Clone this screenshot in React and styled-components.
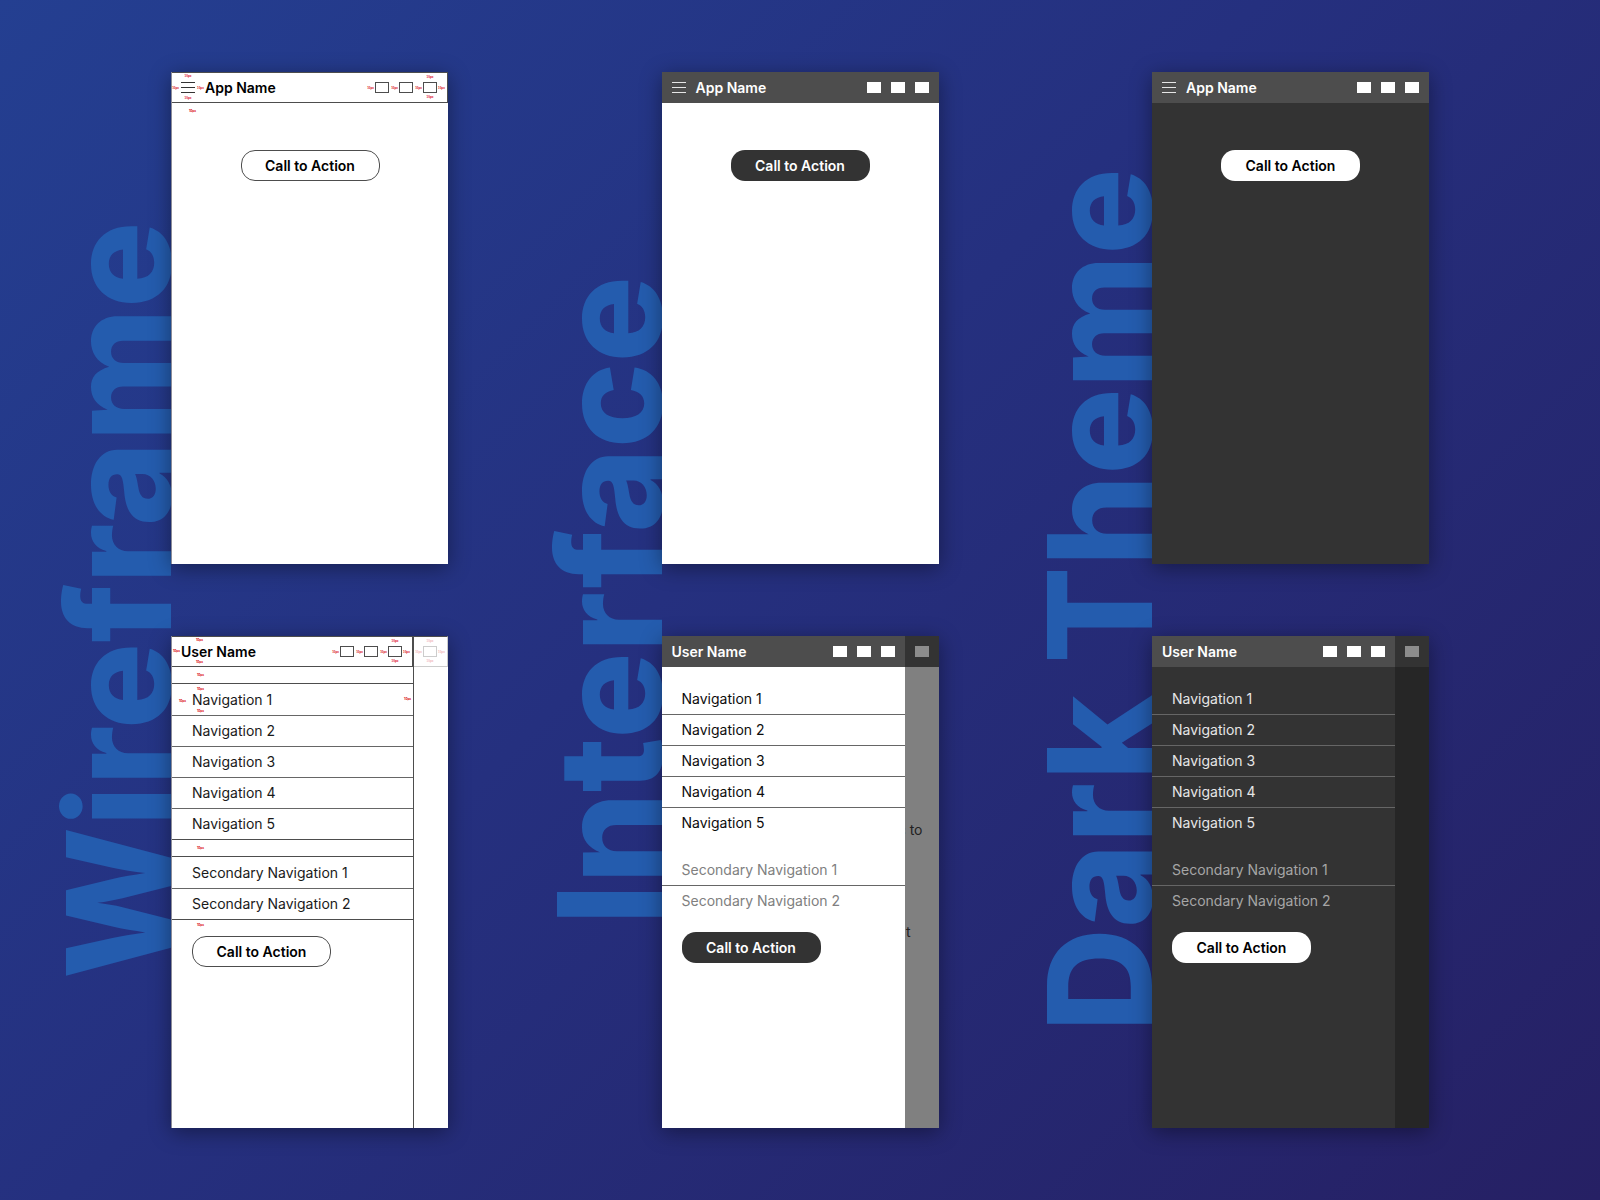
import React from 'react';
import styled, { createGlobalStyle, css } from 'styled-components';

const GlobalStyle = createGlobalStyle`
  * {
    box-sizing: border-box;
  }
  body {
    margin: 0;
  }
  ul {
    list-style: none;
    margin: 0;
    padding: 0;
  }
`;

const themes = {
  wireframe: {
    outlined: true,
    body: '#fff',
    bar: '#fff',
    line: '#4d4d4d',
    heading: '#000',
    text: '#1a1a1a',
    muted: '#1a1a1a',
    icon: '#333',
    square: '#fff',
    button: '#fff',
    buttonText: '#000',
    restBody: '#fff',
    restBar: '#fff',
    restSquare: '#fff',
    restLine: '#ccc',
  },
  light: {
    body: '#fff',
    bar: '#4d4d4d',
    line: '#d0d0d0',
    heading: '#fff',
    text: '#0d0d0d',
    muted: '#808080',
    icon: '#e6e6e6',
    square: '#fff',
    button: '#333',
    buttonText: '#fff',
    restBody: '#808080',
    restBar: '#333',
    restSquare: '#8c8c8c',
  },
  dark: {
    body: '#333',
    bar: '#4d4d4d',
    line: '#666',
    heading: '#fff',
    text: '#e6e6e6',
    muted: '#a6a6a6',
    icon: '#e6e6e6',
    square: '#fff',
    button: '#fff',
    buttonText: '#000',
    restBody: '#262626',
    restBar: '#333',
    restSquare: '#8c8c8c',
  },
};

const Board = styled.main`
  display: flex;
  justify-content: space-between;
  align-items: center;
  min-height: 100vh;
  padding: 72px 171px 72px 66px;
  background: linear-gradient(135deg, #243f91 0%, #25307f 45%, #262064 100%);
  font-family: Inter, 'Liberation Sans', sans-serif;
  font-size: 14px;
  line-height: 16px;
`;

const Column = styled.section`
  display: flex;
  align-items: center;
`;

const Title = styled.h2`
  margin: 0;
  writing-mode: vertical-rl;
  transform: rotate(180deg);
  width: 105px;
  height: 1056px;
  font-size: 144px;
  font-weight: 800;
  line-height: 105px;
  text-align: center;
  white-space: nowrap;
  color: #245cae;
`;

const Phones = styled.div`
  position: relative;
  display: flex;
  flex-direction: column;
  gap: 72px;
`;

const Phone = styled.article`
  display: flex;
  flex-direction: column;
  width: 277px;
  height: 492px;
  background: ${({ $t }) => $t.body};
  box-shadow: 0 4px 20px rgba(0, 0, 0, 0.4);
  ${({ $t }) => $t.outlined && 'border-left: 1px solid #8c8c99;'}
`;

const Bar = styled.header`
  display: flex;
  align-items: center;
  gap: 10px;
  height: 31px;
  padding: 0 10px;
  background: ${({ $t }) => $t.bar};
  ${({ $t }) =>
    $t.outlined &&
    css`
      border: 1px solid ${$t.line};
      border-left: none;
      padding-left: 9px;
    `}
`;

const Name = styled.h3`
  flex: 1;
  margin: 0;
  font-size: 14px;
  font-weight: 600;
  color: ${({ $t }) => $t.heading};
`;

const MenuButton = styled.button`
  position: relative;
  display: flex;
  padding: 0;
  border: none;
  background: none;
  color: ${({ $t }) => $t.icon};
`;

const Square = styled.button`
  position: relative;
  flex: none;
  width: 14px;
  height: 11px;
  padding: 0;
  border: ${({ $t, $dim }) => ($t.outlined ? `1px solid ${$dim ? $t.restLine : $t.line}` : 'none')};
  background: ${({ $t, $dim }) => ($dim ? $t.restSquare : $t.square)};
`;

const Action = styled.button`
  width: 139px;
  height: 31px;
  padding: 0;
  border: ${({ $t }) => ($t.outlined ? `1px solid ${$t.line}` : 'none')};
  border-radius: 14px;
  background: ${({ $t }) => $t.button};
  color: ${({ $t }) => $t.buttonText};
  font: inherit;
  font-weight: 600;
`;

const Content = styled.div`
  position: relative;
  display: flex;
  justify-content: center;
  padding-top: 47px;
`;

const Split = styled.div`
  display: flex;
  flex: 1;
`;

const Drawer = styled.div`
  flex: 1;
  ${({ $t }) => $t.outlined && `border-right: 1px solid ${$t.line};`}
`;

const Rest = styled.div`
  width: 34px;
  overflow: hidden;
  background: ${({ $t }) => $t.restBody};
`;

const RestBar = styled(Bar)`
  background: ${({ $t }) => $t.restBar};
  border-color: ${({ $t }) => $t.restLine};
  ${({ $t }) => $t.outlined && `border-top-color: ${$t.line};`}
`;

const NavList = styled.ul`
  position: relative;
  margin-top: 16px;
  ${({ $t }) => $t.outlined && `border-top: 1px solid ${$t.line};`}
  ${({ $t }) => $t.outlined && `border-bottom: 1px solid ${$t.line};`}
`;

const NavItem = styled.li`
  position: relative;
  height: 31px;
  & + & {
    border-top: ${({ $t, $plain }) => ($plain && !$t.outlined ? 'none' : `1px solid ${$t.line}`)};
  }
`;

const NavLink = styled.a`
  display: flex;
  align-items: center;
  height: 100%;
  padding-left: 20px;
  color: ${({ $t, $muted }) => ($muted ? $t.muted : $t.text)};
  text-decoration: none;
`;

const DrawerAction = styled.div`
  position: relative;
  padding: 16px 20px 0;
`;

const BehindText = styled.p`
  display: flex;
  justify-content: flex-end;
  margin: 0;
  padding-right: ${({ $end }) => $end}px;
  white-space: nowrap;
  color: #222;
`;

const Behind = styled.div`
  display: flex;
  flex-direction: column;
  gap: 86px;
  padding-top: 155px;
`;

const places = {
  top: 'bottom: 100%; left: 50%; transform: translate(-50%, -4px);',
  bottom: 'top: 100%; left: 50%; transform: translate(-50%, 4px);',
  left: 'right: 100%; top: 50%; transform: translate(-2px, -50%);',
  right: 'left: 100%; top: 50%; transform: translate(2px, -50%);',
  under: 'left: 17px; top: 7px;',
  itemTop: 'left: 25px; top: 4px;',
  itemBottom: 'left: 25px; bottom: 2px;',
  spacer: 'left: 25px; bottom: calc(100% + 7px);',
  inset: 'left: 7px; top: 16px;',
  outset: 'right: 2px; top: 14px;',
  start: 'left: -8px; top: 7px;',
  nameTop: 'left: 15px; bottom: calc(100% + 1px);',
  nameBottom: 'left: 15px; top: calc(100% + 1px);',
};

const Mark = styled.span`
  position: absolute;
  ${({ $at }) => places[$at]}
  font-size: 3px;
  font-weight: 700;
  line-height: 3px;
  white-space: nowrap;
  color: ${({ $dim }) => ($dim ? '#f0b3b8' : '#d8000f')};
`;

const NameText = styled.span`
  position: relative;
`;

const Marks = ({ t, at, dim }) =>
  t.outlined ? at.map((place) => <Mark key={place} $at={place} $dim={dim}>10px</Mark>) : null;

const Squares = ({ t }) => (
  <>
    <Square $t={t} aria-label="Action 1">
      <Marks t={t} at={['left']} />
    </Square>
    <Square $t={t} aria-label="Action 2">
      <Marks t={t} at={['left']} />
    </Square>
    <Square $t={t} aria-label="Action 3">
      <Marks t={t} at={['left', 'top', 'bottom', 'right']} />
    </Square>
  </>
);

const HomePhone = ({ t }) => (
  <Phone $t={t}>
    <Bar $t={t}>
      <MenuButton $t={t} aria-label="Menu">
        <svg width="14" height="11" viewBox="0 0 14 11" stroke="currentColor">
          <path d="M0 .5h14M0 5.5h14M0 10.5h14" />
        </svg>
        <Marks t={t} at={['left', 'top', 'bottom', 'right']} />
      </MenuButton>
      <Name $t={t}>App Name</Name>
      <Squares t={t} />
    </Bar>
    <Content>
      <Marks t={t} at={['under']} />
      <Action $t={t}>Call to Action</Action>
    </Content>
  </Phone>
);

const DrawerPhone = ({ t, behind }) => (
  <Phone $t={t}>
    <Split>
      <Drawer $t={t}>
        <Bar $t={t}>
          <Name $t={t}>
            <NameText>
              User Name
              <Marks t={t} at={['start', 'nameTop', 'nameBottom']} />
            </NameText>
          </Name>
          <Squares t={t} />
        </Bar>
        <NavList $t={t}>
          <Marks t={t} at={['spacer']} />
          {[1, 2, 3, 4, 5].map((n) => (
            <NavItem key={n} $t={t}>
              <NavLink $t={t} href="#">{`Navigation ${n}`}</NavLink>
              {n === 1 && <Marks t={t} at={['itemTop', 'itemBottom', 'inset', 'outset']} />}
            </NavItem>
          ))}
        </NavList>
        <NavList $t={t}>
          <Marks t={t} at={['spacer']} />
          {[1, 2].map((n) => (
            <NavItem key={n} $t={t} $plain>
              <NavLink $t={t} $muted href="#">{`Secondary Navigation ${n}`}</NavLink>
            </NavItem>
          ))}
        </NavList>
        <DrawerAction>
          <Marks t={t} at={['itemTop']} />
          <Action $t={t}>Call to Action</Action>
        </DrawerAction>
      </Drawer>
      <Rest $t={t}>
        <RestBar $t={t}>
          <Square $t={t} $dim aria-label="More">
            <Marks t={t} at={['left', 'top', 'bottom', 'right']} dim />
          </Square>
        </RestBar>
        {behind && (
          <Behind>
            <BehindText $end={16}>c to</BehindText>
            <BehindText $end={28}>t</BehindText>
          </Behind>
        )}
      </Rest>
    </Split>
  </Phone>
);

const Showcase = ({ title, t, behind }) => (
  <Column>
    <Title>{title}</Title>
    <Phones>
      <HomePhone t={t} />
      <DrawerPhone t={t} behind={behind} />
    </Phones>
  </Column>
);

const App = () => (
  <>
    <GlobalStyle />
    <Board>
      <Showcase title="Wireframe" t={themes.wireframe} />
      <Showcase title="Interface" t={themes.light} behind />
      <Showcase title="Dark Theme" t={themes.dark} />
    </Board>
  </>
);

export default App;
